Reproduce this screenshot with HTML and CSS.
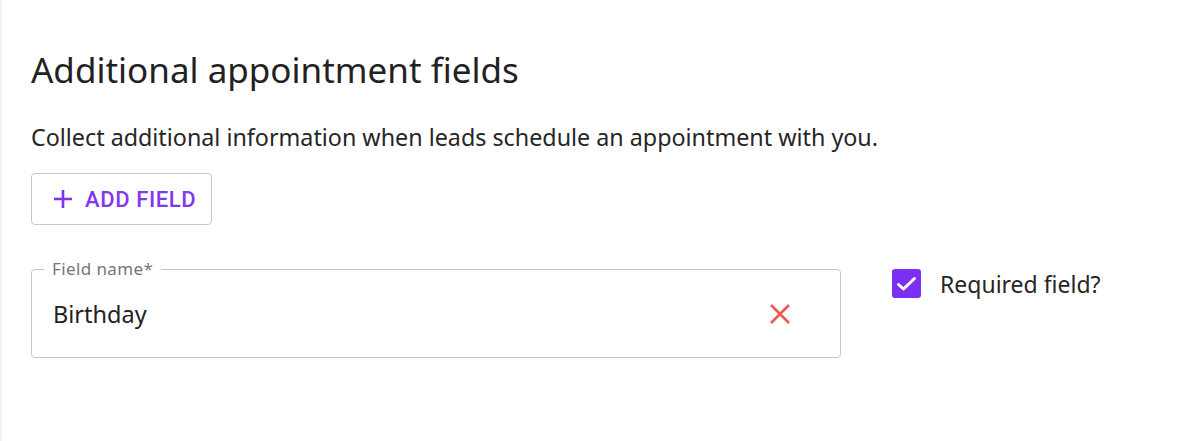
FILE: index.html
```html
<!DOCTYPE html>
<html lang="en">
<head>
<meta charset="utf-8">
<title>Additional appointment fields</title>
<link rel="stylesheet" href="styles.css">
</head>
<body>
<main class="panel">
  <h1 class="title">Additional appointment fields</h1>
  <p class="subtitle">Collect additional information when leads schedule an appointment with you.</p>
  <button class="add-btn" type="button">
    <svg class="plus" width="20" height="20" viewBox="0 0 20 20" aria-hidden="true">
      <path d="M10 1v18M1 10h18" stroke="currentColor" stroke-width="2.6" fill="none"/>
    </svg>
    <span>ADD FIELD</span>
  </button>
  <div class="field-row">
    <fieldset class="text-field">
      <legend class="field-label">Field name*</legend>
      <div class="field-inner">
        <span class="field-value">Birthday</span>
        <svg class="clear" width="22" height="22" viewBox="0 0 22 22" aria-hidden="true">
          <path d="M2 2l18 18M20 2L2 20" stroke="currentColor" stroke-width="2.6" fill="none"/>
        </svg>
      </div>
    </fieldset>
    <label class="check">
      <span class="box">
        <svg width="29" height="29" viewBox="0 0 29 29" aria-hidden="true">
          <path d="M6.5 15.5l5 4.5 11-10.5" stroke="#fff" stroke-width="3" fill="none" stroke-linecap="round" stroke-linejoin="round"/>
        </svg>
      </span>
      <span class="check-text">Required field?</span>
    </label>
  </div>
</main>
</body>
</html>
```

FILE: styles.css
```css
html, body {
  margin: 0;
  padding: 0;
  background: #ffffff;
}

body {
  font-family: "Noto Sans", "Open Sans", sans-serif;
  font-variant-ligatures: none;
  color: #232323;
}

.panel {
  box-sizing: border-box;
  height: 441px;
  border-left: 2px solid #f3f3f3;
  padding: 50px 0 0 29px;
}

.title {
  margin: 0;
  font-size: 35px;
  line-height: 40px;
  font-weight: 400;
  color: #222;
}

.subtitle {
  margin: 33px 0 0;
  font-size: 23.3px;
  line-height: 28px;
  color: #262626;
}

.add-btn {
  margin-top: 22px;
  box-sizing: border-box;
  width: 181px;
  height: 52px;
  display: flex;
  align-items: center;
  gap: 12px;
  padding: 0 0 0 21px;
  background: #fff;
  border: 1px solid #c8c8c8;
  border-radius: 4px;
  color: #8338ec;
  font-family: "Roboto", "Noto Sans", sans-serif;
  font-weight: 500;
  font-size: 22px;
  letter-spacing: 0.6px;
}

.plus {
  display: block;
  color: #7d32f0;
}

.field-row {
  margin-top: 35px;
  display: flex;
  align-items: flex-start;
  gap: 51px;
}

.text-field {
  box-sizing: border-box;
  width: 810px;
  margin: 0;
  padding: 0 49px 7px 12px;
  border: 1px solid #c6c6c6;
  border-radius: 4px;
}

.field-label {
  padding: 0 8px;
  font-size: 17px;
  line-height: 18px;
  letter-spacing: 0.4px;
  color: #767676;
}

.field-inner {
  height: 72px;
  display: flex;
  align-items: center;
  justify-content: space-between;
  padding-left: 9px;
}

.field-value {
  font-size: 23.5px;
  line-height: 28px;
  color: #222;
}

.clear {
  display: block;
  color: #ea5a55;
}

.check {
  margin-top: 9px;
  display: flex;
  align-items: center;
  gap: 19px;
}

.box {
  width: 29px;
  height: 29px;
  border-radius: 3px;
  background: #7b2ff2;
  display: block;
}

.box svg {
  display: block;
}

.check-text {
  font-size: 23px;
  line-height: 28px;
  color: #262626;
}
```
